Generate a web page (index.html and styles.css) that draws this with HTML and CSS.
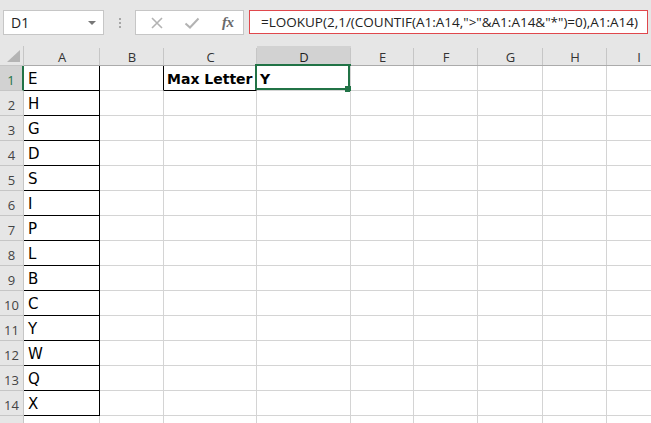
FILE: index.html
```html
<!DOCTYPE html>
<html>
<head>
<meta charset="utf-8">
<link rel="stylesheet" href="styles.css">
</head>
<body>
<div class="app">
  <div class="topbar">
    <div class="namebox">
      <span class="name">D1</span>
      <span class="drop"></span>
    </div>
    <div class="dots"><i></i><i></i><i></i></div>
    <div class="btns">
      <svg class="ico" width="14" height="14" viewBox="0 0 14 14"><path d="M2 2L12 12M12 2L2 12" stroke="#b3b3b3" stroke-width="1.6" fill="none"/></svg>
      <svg class="ico" width="16" height="14" viewBox="0 0 16 14"><path d="M1.5 7.5L6 11.5L14.5 2.5" stroke="#b3b3b3" stroke-width="2" fill="none"/></svg>
      <span class="fx">fx</span>
    </div>
    <div class="formula">=LOOKUP(2,1/(COUNTIF(A1:A14,"&gt;"&amp;A1:A14&amp;"*")=0),A1:A14)</div>
  </div>
  <div class="sheet">
    <div class="corner"><span class="tri"></span></div>
    <div class="ch">A</div><div class="ch">B</div><div class="ch">C</div><div class="ch sel">D</div><div class="ch">E</div><div class="ch">F</div><div class="ch">G</div><div class="ch">H</div><div class="ch">I</div>

    <div class="rh sel">1</div><div class="c a">E</div><div class="c b1"></div><div class="c c1 bold">Max Letter</div><div class="c d1 bold">Y<span class="selbox"><span class="handle"></span></span></div><div class="c"></div><div class="c"></div><div class="c"></div><div class="c"></div><div class="c"></div>
    <div class="rh">2</div><div class="c a">H</div><div class="c"></div><div class="c"></div><div class="c"></div><div class="c"></div><div class="c"></div><div class="c"></div><div class="c"></div><div class="c"></div>
    <div class="rh">3</div><div class="c a">G</div><div class="c"></div><div class="c"></div><div class="c"></div><div class="c"></div><div class="c"></div><div class="c"></div><div class="c"></div><div class="c"></div>
    <div class="rh">4</div><div class="c a">D</div><div class="c"></div><div class="c"></div><div class="c"></div><div class="c"></div><div class="c"></div><div class="c"></div><div class="c"></div><div class="c"></div>
    <div class="rh">5</div><div class="c a">S</div><div class="c"></div><div class="c"></div><div class="c"></div><div class="c"></div><div class="c"></div><div class="c"></div><div class="c"></div><div class="c"></div>
    <div class="rh">6</div><div class="c a">I</div><div class="c"></div><div class="c"></div><div class="c"></div><div class="c"></div><div class="c"></div><div class="c"></div><div class="c"></div><div class="c"></div>
    <div class="rh">7</div><div class="c a">P</div><div class="c"></div><div class="c"></div><div class="c"></div><div class="c"></div><div class="c"></div><div class="c"></div><div class="c"></div><div class="c"></div>
    <div class="rh">8</div><div class="c a">L</div><div class="c"></div><div class="c"></div><div class="c"></div><div class="c"></div><div class="c"></div><div class="c"></div><div class="c"></div><div class="c"></div>
    <div class="rh">9</div><div class="c a">B</div><div class="c"></div><div class="c"></div><div class="c"></div><div class="c"></div><div class="c"></div><div class="c"></div><div class="c"></div><div class="c"></div>
    <div class="rh">10</div><div class="c a">C</div><div class="c"></div><div class="c"></div><div class="c"></div><div class="c"></div><div class="c"></div><div class="c"></div><div class="c"></div><div class="c"></div>
    <div class="rh">11</div><div class="c a">Y</div><div class="c"></div><div class="c"></div><div class="c"></div><div class="c"></div><div class="c"></div><div class="c"></div><div class="c"></div><div class="c"></div>
    <div class="rh">12</div><div class="c a">W</div><div class="c"></div><div class="c"></div><div class="c"></div><div class="c"></div><div class="c"></div><div class="c"></div><div class="c"></div><div class="c"></div>
    <div class="rh">13</div><div class="c a">Q</div><div class="c"></div><div class="c"></div><div class="c"></div><div class="c"></div><div class="c"></div><div class="c"></div><div class="c"></div><div class="c"></div>
    <div class="rh">14</div><div class="c a">X</div><div class="c"></div><div class="c"></div><div class="c"></div><div class="c"></div><div class="c"></div><div class="c"></div><div class="c"></div><div class="c"></div>
    <div class="rh"></div><div class="c"></div><div class="c"></div><div class="c"></div><div class="c"></div><div class="c"></div><div class="c"></div><div class="c"></div><div class="c"></div><div class="c"></div>
  </div>
</div>
</body>
</html>
```
FILE: styles.css
```css
* { box-sizing: border-box; }
html, body { margin: 0; padding: 0; background: #fff; }
.app { width: 651px; height: 423px; overflow: hidden; }

.topbar {
  height: 46px;
  background: #e6e6e6;
  display: flex;
  align-items: flex-start;
  padding-top: 10px;
  padding-left: 3px;
  font-family: "Open Sans", "Noto Sans", sans-serif;
}
.namebox {
  width: 101px; height: 25px;
  background: #fff;
  border: 1px solid #c6c6c6;
  display: flex; align-items: center; justify-content: space-between;
  padding: 0 7px 0 7px;
}
.name { font-size: 14px; color: #222; }
.drop {
  width: 0; height: 0;
  border-left: 4px solid transparent; border-right: 4px solid transparent;
  border-top: 4px solid #777;
}
.dots {
  width: 31px; height: 25px;
  display: flex; flex-direction: column; align-items: center; justify-content: center; gap: 2px;
}
.dots i { display: block; width: 2px; height: 2px; background: #a6a6a6; }
.btns {
  width: 109px; height: 25px;
  background: #fff;
  border: 1px solid #c6c6c6;
  display: flex; align-items: center;
  padding-left: 14px;
}
.btns .ico:nth-child(1) { margin-right: 20px; }
.btns .ico:nth-child(2) { margin-right: 22px; }
.fx {
  font-family: "Liberation Serif", serif;
  font-style: italic; font-weight: bold;
  font-size: 15px; color: #6a6a6a;
  letter-spacing: -0.5px;
}
.formula {
  margin-left: 5px;
  width: 399px; height: 24px;
  background: #fff;
  border: 1px solid #e0474c;
  font-size: 13.5px; color: #222;
  padding-left: 11px;
  line-height: 23px;
  white-space: nowrap;
  overflow: hidden;
}

.sheet {
  display: grid;
  grid-template-columns: 24px 76px 64px 93px 94px 63px 64px 65px 64px 64px;
  grid-template-rows: 20px repeat(15, 25px);
  width: 680px;
}
.corner {
  background: #e6e6e6;
  border-right: 1px solid #c6c6c6;
  border-bottom: 1px solid #c6c6c6;
  position: relative;
}
.tri {
  position: absolute; right: 3px; bottom: 3px;
  width: 0; height: 0;
  border-left: 13px solid transparent;
  border-bottom: 12px solid #b4b4b4;
}
.ch {
  background: #e6e6e6;
  border-bottom: 1px solid #ababab;
  position: relative;
  display: flex; align-items: center; justify-content: center;
  font-family: "Open Sans", "Noto Sans", sans-serif;
  font-size: 13px; color: #333;
  padding-top: 2px;
}
.ch::after {
  content: ""; position: absolute; right: 0; top: 2px; bottom: 0;
  width: 1px; background: #c6c6c6;
}
.ch.sel { background: #d2d2d2; border-bottom: 2px solid #217346; color: #1e1e1e; padding-top: 3px; }
.rh {
  background: #e6e6e6;
  border-right: 1px solid #c6c6c6;
  border-bottom: 1px solid #c6c6c6;
  display: flex; align-items: center; justify-content: center;
  font-family: "Open Sans", "Noto Sans", sans-serif;
  font-size: 13px; color: #444;
  padding-top: 3px;
}
.rh.sel { background: #d2d2d2; border-right: 2px solid #217346; color: #217346; }
.c {
  border-right: 1px solid #d4d4d4;
  border-bottom: 1px solid #d4d4d4;
  font-family: "DejaVu Sans", sans-serif;
  font-size: 14px; color: #000;
  padding-left: 4px;
  line-height: 24px;
  padding-top: 1px;
  white-space: nowrap;
  position: relative;
}
.c.a { border-right-color: #000; border-bottom-color: #000; font-size: 15px; }
.c.b1 { border-right-color: #000; }
.c.c1 { border-bottom-color: #000; padding-left: 3px; overflow: visible; }
.bold { font-weight: bold; }
.c.d1 { padding-left: 3px; }
.selbox {
  position: absolute; top: -2px; left: -2px; right: 0; bottom: 0;
  border: 2px solid #217346;
}
.handle {
  position: absolute; right: -3px; bottom: -4px;
  width: 6px; height: 6px;
  background: #217346;
}
```
